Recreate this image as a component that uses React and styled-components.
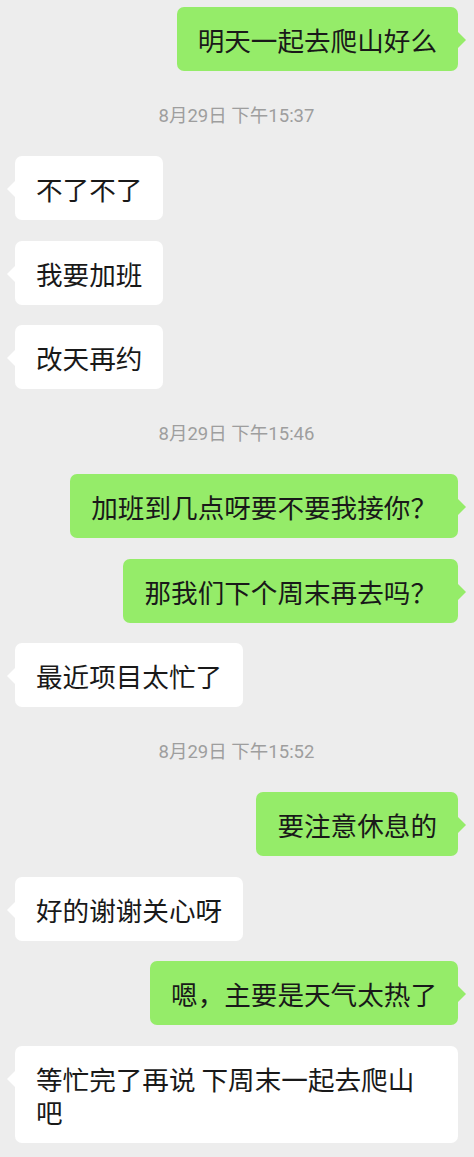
import React from 'react'
import styled, { createGlobalStyle } from 'styled-components'

const GlobalStyle = createGlobalStyle`
  html, body {
    margin: 0;
    padding: 0;
    background: #ededed;
  }
  body {
    font-family: "Noto Sans CJK SC", "Noto Sans", sans-serif;
  }
`

// placeholder copy, same lengths as the original lines
const messages = [
  { type: 'msg', me: true, text: '明天一起去爬山好么' },
  { type: 'time', text: '8月29日 下午15:37' },
  { type: 'msg', me: false, text: '不了不了' },
  { type: 'msg', me: false, text: '我要加班' },
  { type: 'msg', me: false, text: '改天再约' },
  { type: 'time', text: '8月29日 下午15:46' },
  { type: 'msg', me: true, text: '加班到几点呀要不要我接你？' },
  { type: 'msg', me: true, text: '那我们下个周末再去吗？' },
  { type: 'msg', me: false, text: '最近项目太忙了' },
  { type: 'time', text: '8月29日 下午15:52' },
  { type: 'msg', me: true, text: '要注意休息的' },
  { type: 'msg', me: false, text: '好的谢谢关心呀' },
  { type: 'msg', me: true, text: '嗯，主要是天气太热了' },
  { type: 'msg', me: false, text: '等忙完了再说 下周末一起去爬山吧' },
]

const Chat = styled.div`
  width: 474px;
  min-height: 1157px;
  box-sizing: border-box;
  padding: 7px 16px 20px 15px;
  display: flex;
  flex-direction: column;
  gap: 20.5px;
  background: #ededed;
`

const Row = styled.div`
  display: flex;
  justify-content: ${p => (p.$me ? 'flex-end' : 'flex-start')};
`

const Bubble = styled.div`
  position: relative;
  max-width: ${p => (p.$me ? '400px' : '446px')};
  box-sizing: border-box;
  padding: 16px 21px 15px 21px;
  border-radius: 7px;
  background: ${p => (p.$me ? '#95ec69' : '#ffffff')};
  color: #191919;
  font-size: 26.6px;
  line-height: 33px;
  word-break: break-all;

  &::after {
    content: '';
    position: absolute;
    top: 25px;
    ${p => (p.$me ? 'right: -8px;' : 'left: -8px;')}
    width: 0;
    height: 0;
    border-top: 8px solid transparent;
    border-bottom: 8px solid transparent;
    ${p =>
      p.$me
        ? 'border-left: 8px solid #95ec69;'
        : 'border-right: 8px solid #ffffff;'}
  }
`

const Time = styled.div`
  text-align: center;
  font-family: Roboto, "Noto Sans CJK SC", sans-serif;
  font-size: 18.5px;
  line-height: 24px;
  color: #9e9e9e;
  padding: 12px 0 8px;
`

function App() {
  return (
    <>
      <GlobalStyle />
      <Chat>
        {messages.map((m, i) =>
          m.type === 'time' ? (
            <Time key={i}>{m.text}</Time>
          ) : (
            <Row key={i} $me={m.me}>
              <Bubble $me={m.me}>{m.text}</Bubble>
            </Row>
          )
        )}
      </Chat>
    </>
  )
}

export default App
